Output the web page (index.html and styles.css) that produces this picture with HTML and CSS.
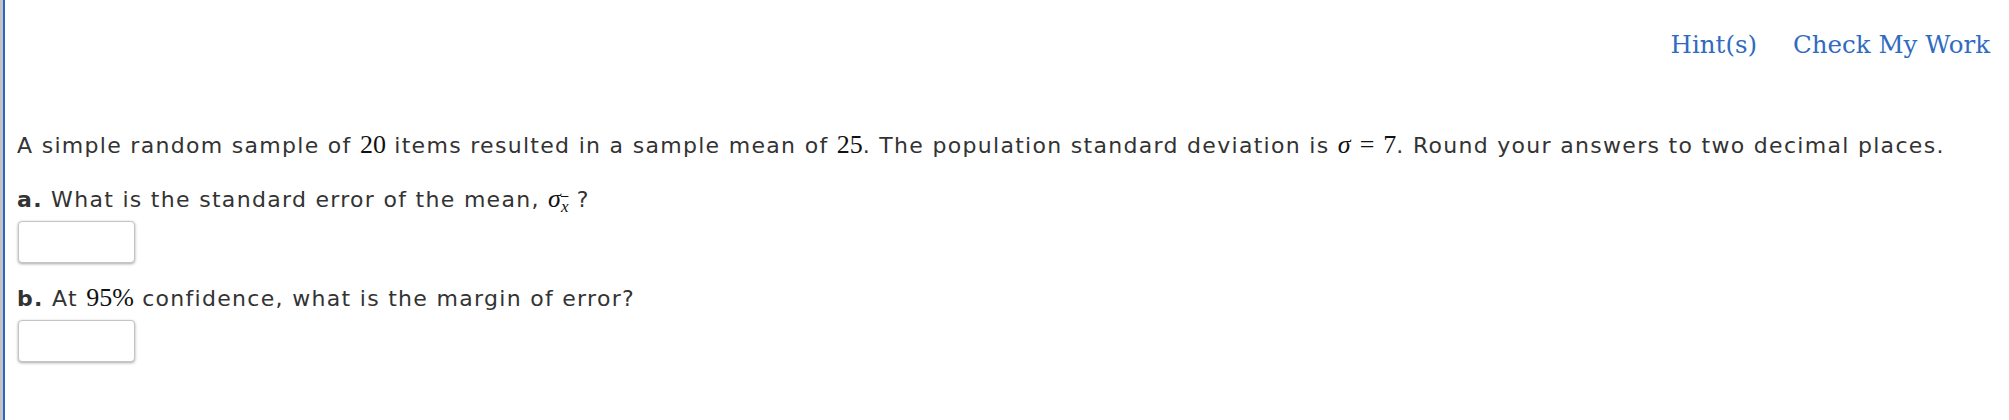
FILE: index.html
```html
<!DOCTYPE html>
<html lang="en">

<head>
    <meta charset="UTF-8">
    <meta name="viewport" content="width=device-width, initial-scale=1.0">
    <title>Problem</title>
    <link rel="stylesheet" href="styles.css">
</head>

<body>
    <div class="frame">
        <div class="problem">
            <div class="toolbar">
                <a href="#" class="toolLink">Hint(s)</a>
                <a href="#" class="toolLink">Check My Work</a>
            </div>

            <div class="question">
                <p class="prompt">
                    A simple random sample of <span class="math">20</span> items resulted in a sample mean of
                    <span class="math">25</span>. The population standard deviation is
                    <span class="math"><i>σ</i><span class="rel">=</span>7</span>. Round your answers to two decimal places.
                </p>

                <div class="part">
                    <p class="partText">
                        <b>a.</b> What is the standard error of the mean,
                        <span class="math"><i>σ</i><sub class="xbar"><i>x</i></sub></span> ?
                    </p>
                    <input class="answer" type="text">
                </div>

                <div class="part">
                    <p class="partText">
                        <b>b.</b> At <span class="math">95%</span> confidence, what is the margin of error?
                    </p>
                    <input class="answer" type="text">
                </div>
            </div>
        </div>
    </div>
</body>

</html>
```

FILE: styles.css
```css
* {
    margin: 0px;
    padding: 0px;
    box-sizing: border-box;
}

body {
    background-color: white;
    font-family: "DejaVu Sans", Verdana, sans-serif;
    color: #333333;
}

.frame {
    height: 420px;
    border-left: 3px solid #c3c3c3;
}

.problem {
    height: 100%;
    border-left: 2px solid #2d62c9;
}

.toolbar {
    display: flex;
    justify-content: flex-end;
    gap: 36px;
    padding: 28px 19px 0px 0px;
    line-height: 34px;
}

.toolLink {
    font-family: "DejaVu Serif", Georgia, serif;
    font-size: 24.5px;
    color: #2f6bc0;
    text-decoration: none;
}

.question {
    padding: 69px 0px 0px 12px;
    font-size: 22px;
    line-height: 30px;
    letter-spacing: 1.3px;
}

.prompt {
    margin-bottom: 24px;
}

.math {
    font-family: "Liberation Serif", "Times New Roman", serif;
    font-size: 26px;
    line-height: 0;
    letter-spacing: 0px;
    color: #111111;
    white-space: nowrap;
}

.rel {
    padding: 0px 9px;
}

.xbar {
    font-size: 17px;
    line-height: 0;
    vertical-align: -5px;
    text-decoration: overline;
}

.partText b {
    font-weight: bold;
}

.answer {
    display: block;
    width: 117px;
    height: 42px;
    margin: 6px 0px 21px 1px;
    border: 1px solid #c4c4c4;
    border-radius: 4px;
    box-shadow: 0px 1px 3px rgba(0, 0, 0, 0.35);
    background-color: white;
}
```
